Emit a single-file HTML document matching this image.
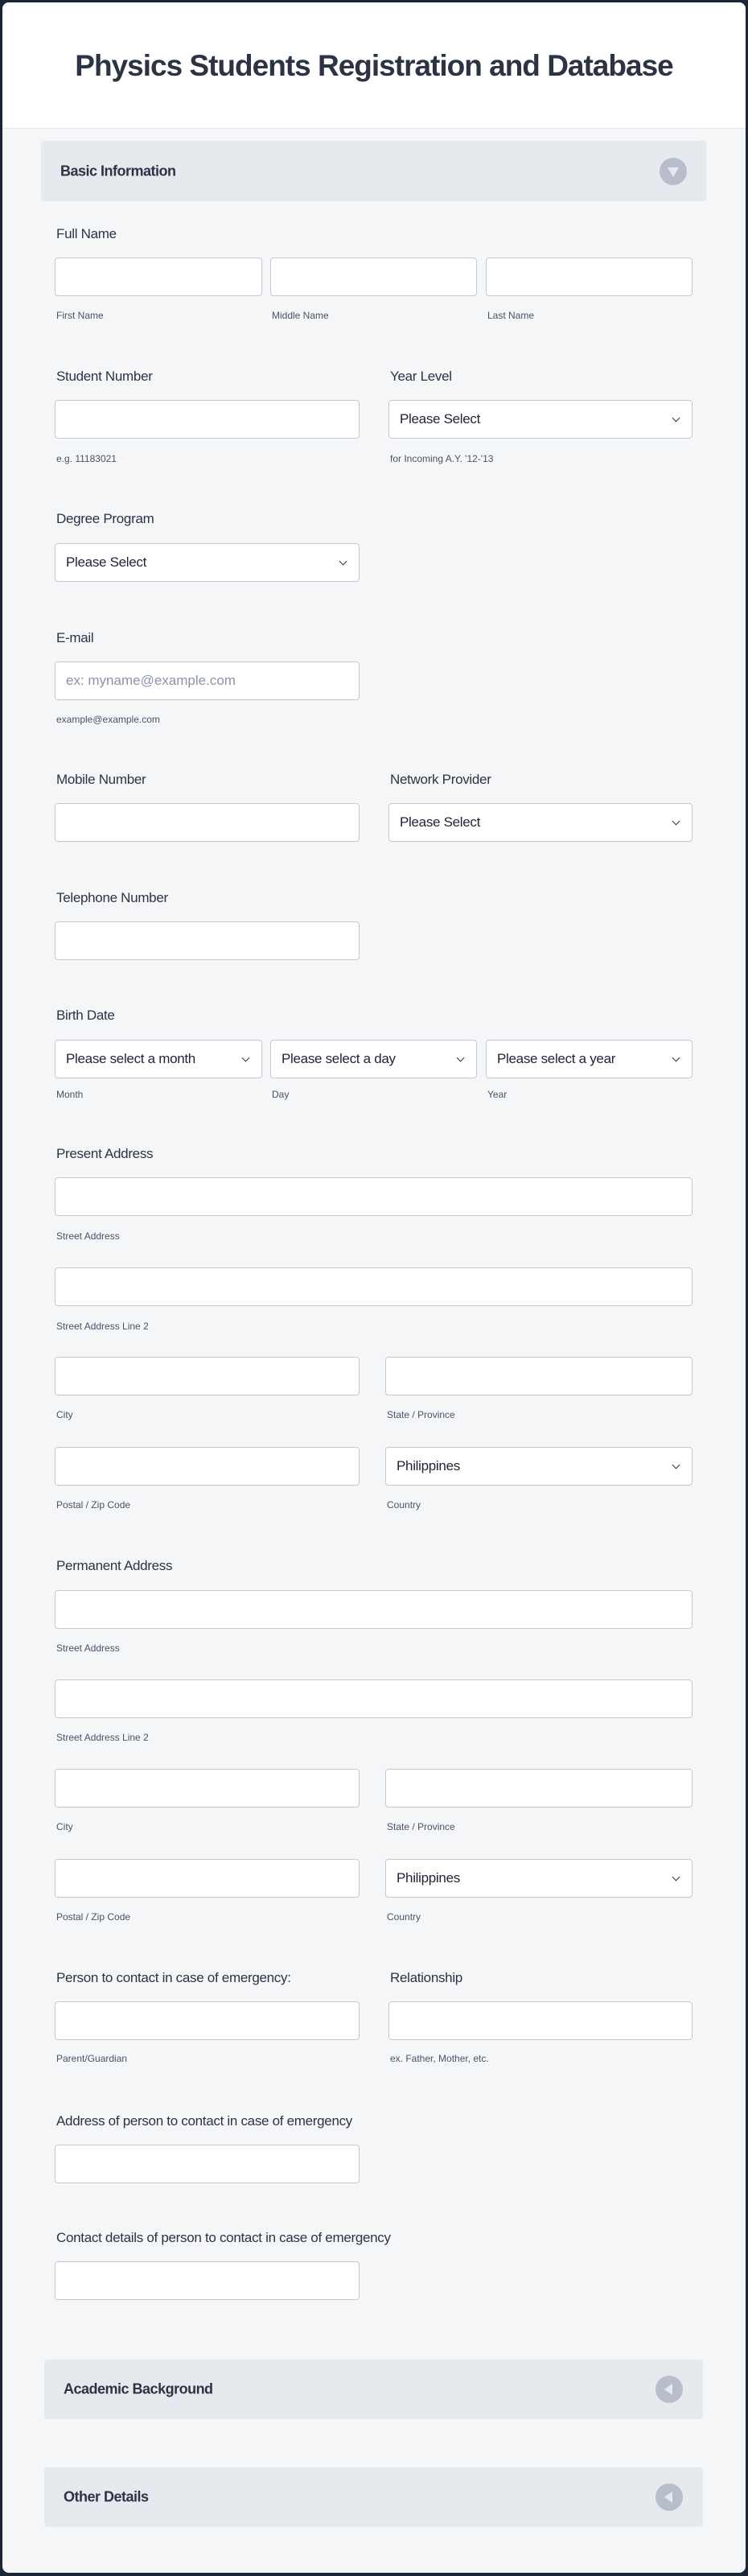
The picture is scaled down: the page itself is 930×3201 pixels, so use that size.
<!DOCTYPE html>
<html><head><meta charset="utf-8"><style>
*{box-sizing:border-box;margin:0;padding:0}
html,body{width:930px;height:3201px;background:#1b2536;overflow:hidden}
body{font-family:"Liberation Sans",sans-serif;color:#2c3345;position:relative}
.card{position:absolute;left:3px;top:3px;width:924px;height:3194px;background:#f5f6f8;border-radius:8px;overflow:hidden}
.hdr{position:absolute;left:0;top:0;width:100%;height:157px;background:#fff;border-bottom:1px solid #e4e6ea}
.hdr h1{position:absolute;left:0;right:0;top:58px;text-align:center;font-size:37px;font-weight:bold;letter-spacing:-1px;color:#2c3345}
.bar{position:absolute;background:#e6e9ee;border-radius:4px}
.bar span{position:absolute;left:24px;top:50%;transform:translateY(-50%);font-size:18px;font-weight:bold;letter-spacing:-0.5px;white-space:nowrap}
.ic{position:absolute;width:34px;height:34px;border-radius:50%;background:#b8bec9;top:50%;margin-top:-17px}
.wrap{position:absolute;left:0;top:0;width:930px;height:3201px}
.l{position:absolute;font-size:17px;line-height:20px;margin-top:-10px;letter-spacing:-0.3px;white-space:nowrap}
.s{position:absolute;font-size:12px;line-height:16px;margin-top:-8px;color:#4a5266;white-space:nowrap}
.i{position:absolute;height:48px;background:#fff;border:1px solid #c3c8d3;border-radius:4px;white-space:nowrap}
.sel{font-size:17px;line-height:46px;padding-left:13px;color:#1e2433;letter-spacing:-0.3px}
.sel:after{content:"";position:absolute;right:16px;top:18px;width:6px;height:6px;border-right:1.5px solid #2c3345;border-bottom:1.5px solid #2c3345;transform:rotate(45deg)}
.ph{font-size:17px;line-height:46px;padding-left:13px;color:#8a94a6}
</style></head><body>
<div class="card">
<div class="hdr"><h1>Physics Students Registration and Database</h1></div>
<div class="bar" style="left:48px;top:172px;width:827px;height:75px"><span>Basic Information</span><div class="ic" style="right:24px"><svg width="34" height="34"><path d="M10 12 L24 12 L17 24 Z" fill="#e6e9ee"/></svg></div></div>
</div>
<div class="wrap">
<div class="l" style="left:70px;top:291px">Full Name</div>
<div class="i" style="left:68px;top:320px;width:258px"></div>
<div class="i" style="left:336px;top:320px;width:257px"></div>
<div class="i" style="left:604px;top:320px;width:257px"></div>
<div class="s" style="left:70px;top:392px">First Name</div>
<div class="s" style="left:338px;top:392px">Middle Name</div>
<div class="s" style="left:606px;top:392px">Last Name</div>
<div class="l" style="left:70px;top:468px">Student Number</div>
<div class="l" style="left:485px;top:468px">Year Level</div>
<div class="i" style="left:68px;top:497px;width:379px"></div>
<div class="i sel" style="left:483px;top:497px;width:378px">Please Select</div>
<div class="s" style="left:70px;top:570px">e.g. 11183021</div>
<div class="s" style="left:485px;top:570px">for Incoming A.Y. '12-'13</div>
<div class="l" style="left:70px;top:645px">Degree Program</div>
<div class="i sel" style="left:68px;top:675px;width:379px">Please Select</div>
<div class="l" style="left:70px;top:793px">E-mail</div>
<div class="i ph" style="left:68px;top:822px;width:379px">ex: myname@example.com</div>
<div class="s" style="left:70px;top:894px">example@example.com</div>
<div class="l" style="left:70px;top:969px">Mobile Number</div>
<div class="l" style="left:485px;top:969px">Network Provider</div>
<div class="i" style="left:68px;top:998px;width:379px"></div>
<div class="i sel" style="left:483px;top:998px;width:378px">Please Select</div>
<div class="l" style="left:70px;top:1116px">Telephone Number</div>
<div class="i" style="left:68px;top:1145px;width:379px"></div>
<div class="l" style="left:70px;top:1262px">Birth Date</div>
<div class="i sel" style="left:68px;top:1292px;width:258px">Please select a month</div>
<div class="i sel" style="left:336px;top:1292px;width:257px">Please select a day</div>
<div class="i sel" style="left:604px;top:1292px;width:257px">Please select a year</div>
<div class="s" style="left:70px;top:1360px">Month</div>
<div class="s" style="left:338px;top:1360px">Day</div>
<div class="s" style="left:606px;top:1360px">Year</div>
<div class="l" style="left:70px;top:1434px">Present Address</div>
<div class="i" style="left:68px;top:1463px;width:793px"></div>
<div class="s" style="left:70px;top:1536px">Street Address</div>
<div class="i" style="left:68px;top:1575px;width:793px"></div>
<div class="s" style="left:70px;top:1648px">Street Address Line 2</div>
<div class="i" style="left:68px;top:1686px;width:379px"></div>
<div class="i" style="left:479px;top:1686px;width:382px"></div>
<div class="s" style="left:70px;top:1758px">City</div>
<div class="s" style="left:481px;top:1758px">State / Province</div>
<div class="i" style="left:68px;top:1798px;width:379px"></div>
<div class="i sel" style="left:479px;top:1798px;width:382px">Philippines</div>
<div class="s" style="left:70px;top:1870px">Postal / Zip Code</div>
<div class="s" style="left:481px;top:1870px">Country</div>
<div class="l" style="left:70px;top:1946px">Permanent Address</div>
<div class="i" style="left:68px;top:1976px;width:793px"></div>
<div class="s" style="left:70px;top:2048px">Street Address</div>
<div class="i" style="left:68px;top:2087px;width:793px"></div>
<div class="s" style="left:70px;top:2159px">Street Address Line 2</div>
<div class="i" style="left:68px;top:2198px;width:379px"></div>
<div class="i" style="left:479px;top:2198px;width:382px"></div>
<div class="s" style="left:70px;top:2270px">City</div>
<div class="s" style="left:481px;top:2270px">State / Province</div>
<div class="i" style="left:68px;top:2310px;width:379px"></div>
<div class="i sel" style="left:479px;top:2310px;width:382px">Philippines</div>
<div class="s" style="left:70px;top:2382px">Postal / Zip Code</div>
<div class="s" style="left:481px;top:2382px">Country</div>
<div class="l" style="left:70px;top:2458px">Person to contact in case of emergency:</div>
<div class="l" style="left:485px;top:2458px">Relationship</div>
<div class="i" style="left:68px;top:2487px;width:379px"></div>
<div class="i" style="left:483px;top:2487px;width:378px"></div>
<div class="s" style="left:70px;top:2558px">Parent/Guardian</div>
<div class="s" style="left:485px;top:2558px">ex. Father, Mother, etc.</div>
<div class="l" style="left:70px;top:2636px">Address of person to contact in case of emergency</div>
<div class="i" style="left:68px;top:2665px;width:379px"></div>
<div class="l" style="left:70px;top:2781px">Contact details of person to contact in case of emergency</div>
<div class="i" style="left:68px;top:2810px;width:379px"></div>
<div class="bar" style="left:55px;top:2932px;width:819px;height:74px"><span>Academic Background</span><div class="ic" style="right:25px"><svg width="34" height="34"><path d="M21 10 L21 24 L11 17 Z" fill="#e6e9ee"/></svg></div></div>
<div class="bar" style="left:55px;top:3066px;width:819px;height:74px"><span>Other Details</span><div class="ic" style="right:25px"><svg width="34" height="34"><path d="M21 10 L21 24 L11 17 Z" fill="#e6e9ee"/></svg></div></div>
</div>
</body></html>
